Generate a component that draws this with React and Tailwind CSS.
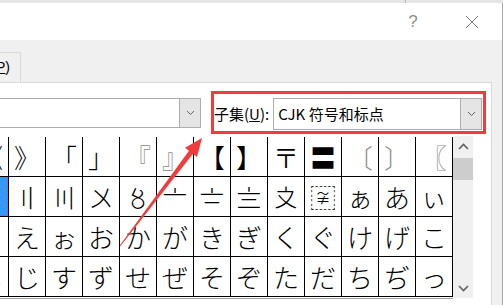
import React from 'react';

const ROWS = [
  ['《', '》', '「', '」', '『', '』', '【', '】', '〒', '〓', '〔', '〕', '〖'],
  ['〡', '〢', '〣', '〤', '〥', '〦', '〧', '〨', '〩', '〾', 'ぁ', 'あ', 'ぃ'],
  ['ぇ', 'え', 'ぉ', 'お', 'か', 'が', 'き', 'ぎ', 'く', 'ぐ', 'け', 'げ', 'こ'],
  ['し', 'じ', 'す', 'ず', 'せ', 'ぜ', 'そ', 'ぞ', 'た', 'だ', 'ち', 'ぢ', 'っ'],
];

const LIGHT = ['『', '』', '〖', '〔', '〕'];

function Chevron({ className = '' }) {
  return (
    <svg width="9" height="6" viewBox="0 0 9 6" className={className}>
      <polyline points="1,1 4.5,4.5 8,1" fill="none" stroke="#606060" strokeWidth="1" />
    </svg>
  );
}

function ComboButton() {
  return (
    <div className="w-[21px] h-full bg-[#e5e5e5] border-l border-[#adadad] flex items-center justify-center">
      <Chevron />
    </div>
  );
}

function Cell({ ch, selected }) {
  const light = LIGHT.includes(ch);
  return (
    <div
      className={`w-[37px] h-[40px] border-r border-b border-black flex items-center justify-center text-[26px] leading-none font-light ${
        selected ? 'bg-[#3399ff] text-white' : light ? 'text-[#8a8a8a]' : 'text-black'
      }`}
    >
      {selected ? (
        <div className="w-full h-full flex items-center justify-center border border-dotted border-[#c06a00]">{ch}</div>
      ) : (
        ch
      )}
    </div>
  );
}

export default function App() {
  return (
    <div className="relative w-[503px] h-[305px] overflow-hidden bg-[#f0f0f0] flex flex-col font-['Noto_Sans_CJK_SC','Noto_Sans',sans-serif]">
      {/* window behind */}
      <div className="h-[3px] bg-[#e6e6e6] shrink-0">
        <div className="w-[406px] h-full border-r border-[#b8b8b8]" />
      </div>

      {/* dialog */}
      <div className="flex-1 flex flex-col w-[503px] border-r border-[#a8a8a8] min-h-0">
        {/* title bar */}
        <div className="h-[37px] shrink-0 bg-white flex items-center justify-end pr-[23px]">
          <span className="w-[12px] text-center text-[17px] leading-none text-[#8c8c8c] font-['Liberation_Sans',sans-serif]">?</span>
          <svg width="14" height="14" viewBox="0 0 14 14" className="ml-[46px]">
            <path d="M1 1 L13 13 M13 1 L1 13" stroke="#7a7a7a" strokeWidth="1" fill="none" />
          </svg>
        </div>

        {/* body */}
        <div className="flex-1 flex flex-col pt-[12px] min-h-0">
          <div className="h-[30px] shrink-0 flex">
            <div className="w-[21px] h-full border-t border-r border-[#d9d9d9] flex items-center justify-end pr-[10px] text-[14px] text-black whitespace-nowrap font-['Liberation_Sans',sans-serif]">
              (<u>P</u>)
            </div>
          </div>

          {/* tab page */}
          <div className="flex-1 w-[492px] bg-white border-t border-r border-[#d9d9d9] pt-[15px] min-h-0">
            <div className="flex items-start h-[32px]">
              <div className="w-[201px] h-[30px] border-y border-r border-[#adadad] flex justify-end">
                <ComboButton />
              </div>
              <div className="ml-[13px] h-[32px] flex items-center text-[15px] text-black whitespace-nowrap">
                子集(<u>U</u>):
              </div>
              <div className="ml-[4px] w-[209px] h-[32px] border border-[#adadad] flex items-center">
                <span className="flex-1 pl-[4px] text-[15px] text-black whitespace-nowrap">CJK 符号和标点</span>
                <ComboButton />
              </div>
            </div>

            {/* character grid */}
            <div className="mt-[6px] flex items-start">
              <div className="-ml-[28px] pt-[1px] pb-[1px] border-b border-[#a0a0a0] font-['Noto_Sans_CJK_JP','Noto_Sans_CJK_SC',sans-serif]">
                <div className="grid grid-cols-[repeat(13,37px)]">
                  {ROWS.map((row, r) =>
                    row.map((ch, c) => <Cell key={`${r}-${c}`} ch={ch} selected={r === 1 && c === 0} />)
                  )}
                </div>
              </div>
              <div className="w-[20px] h-[162px] bg-[#f0f0f0] flex flex-col">
                <div className="h-[20px] flex items-center justify-center">
                  <svg width="11" height="7" viewBox="0 0 11 7">
                    <polyline points="1,6 5.5,1.5 10,6" fill="none" stroke="#606060" strokeWidth="1.6" />
                  </svg>
                </div>
                <div className="mt-[2px] h-[22px] bg-[#cdcdcd]" />
                <div className="flex-1" />
                <div className="h-[20px] flex items-center justify-center">
                  <svg width="11" height="7" viewBox="0 0 11 7">
                    <polyline points="1,1 5.5,5.5 10,1" fill="none" stroke="#606060" strokeWidth="1.6" />
                  </svg>
                </div>
              </div>
            </div>
          </div>
        </div>
      </div>

      {/* annotation: red box */}
      <div className="absolute left-[211px] top-[91px] w-[275px] h-[43px] border-[3px] border-[#f03c3c] pointer-events-none" />

      {/* annotation: red arrow */}
      <svg className="absolute inset-0 pointer-events-none" width="503" height="305" viewBox="0 0 503 305">
        <polygon
          points="119.6,245.7 189,150.8 185,147.7 202,138 197,157 193,153.8 120.4,246.3"
          fill="#f03c3c"
        />
      </svg>
    </div>
  );
}
